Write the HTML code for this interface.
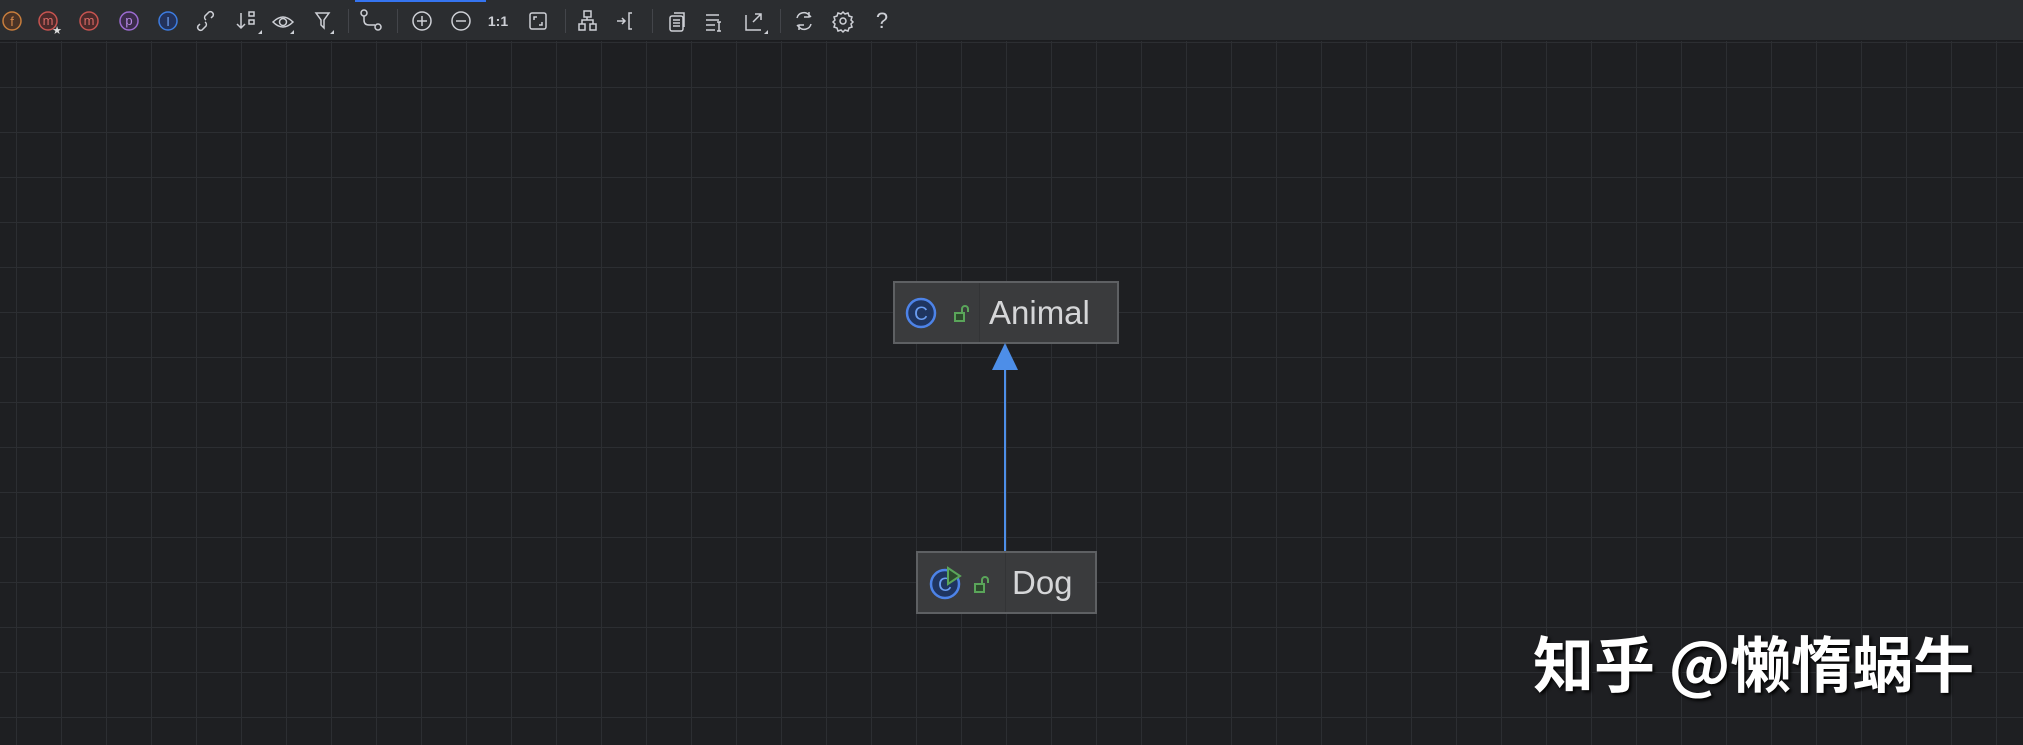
<!DOCTYPE html><html><head><meta charset="utf-8"><style>
html,body{margin:0;padding:0}
body{width:2023px;height:745px;overflow:hidden;position:relative;background:#1e1f22;font-family:"Liberation Sans","Noto Sans CJK SC",sans-serif}
.grid{position:absolute;left:0;top:40px;width:2023px;height:705px;
background-image:linear-gradient(to right,#2c2e32 1px,transparent 1px),linear-gradient(to bottom,#2c2e32 1px,transparent 1px);
background-size:45px 45px;background-position:16px 2px}
.tb{position:absolute;left:0;top:0;width:2023px;height:40px;background:#2b2d30;border-bottom:1px solid #1b1c1f}
.node{position:absolute;background:#3a3b3d;border:2px solid #5e6063;box-sizing:border-box}
.node .div{position:absolute;top:0;bottom:0;width:1px;background:#333436}
.node span{position:absolute;color:#d5d6d8;font-size:33px;top:11px}
.wm{position:absolute;left:1533px;top:616px;color:#fff;font-size:61px;font-weight:bold;font-family:"Noto Sans CJK SC",sans-serif;text-shadow:2px 2px 3px #000;white-space:pre}
</style></head><body>
<div class="grid"></div>
<div class="tb"></div>
<div style="position:absolute;left:355px;top:0;width:131px;height:2px;background:#3574f0"></div>
<svg width="2023" height="42" style="position:absolute;left:0;top:0" fill="none" stroke-width="1.5">
<g font-family="Liberation Sans" text-anchor="middle">
<circle cx="12" cy="21" r="9" stroke="#c77d3c" fill="#4a3326"/><text x="12" y="26" font-size="13" fill="#d8894a">f</text>
<circle cx="48" cy="21" r="9" stroke="#c75450" fill="#4b2a2a"/><text x="48" y="25" font-size="13" fill="#d86a66">m</text>
<text x="57" y="34" font-size="11" fill="#ddd">★</text>
<circle cx="89" cy="21" r="9" stroke="#c75450" fill="#4b2a2a"/><text x="89" y="25" font-size="13" fill="#d86a66">m</text>
<circle cx="129" cy="21" r="9" stroke="#9b6bd0" fill="#3b2c4b"/><text x="129" y="25" font-size="13" fill="#b88ae6">p</text>
<circle cx="168" cy="21" r="9" stroke="#3d7ce0" fill="#23325a"/><text x="168" y="26" font-size="13" fill="#6ea0f0">I</text>
</g>
<g stroke="#ced0d6">
<path d="M200 24l-2 2a3 3 0 0 0 4 4l4-4a3 3 0 0 0-1-4M211 18l2-2a3 3 0 0 0-4-4l-4 4a3 3 0 0 0 1 4"/>
<path d="M241 13v15M237 24l4 4 4-4"/><rect x="249" y="12" width="5" height="4"/><rect x="249" y="20" width="5" height="4"/>
<path d="M273 22q10-10 20 0q-10 10-20 0z"/><circle cx="283" cy="22" r="3.5"/>
<path d="M316 13h13l-5 7v8l-3-3v-5z"/>
<circle cx="364" cy="13" r="3"/><circle cx="378" cy="27" r="3"/><path d="M364 16v4q0 5 5 5h6"/>
<circle cx="422" cy="21" r="9"/><path d="M417 21h10M422 16v10"/>
<circle cx="461" cy="21" r="9"/><path d="M456 21h10"/>
<rect x="530" y="13" width="16" height="16" rx="2"/><path d="M534 20v-3h3M542 22v3h-3"/>
<rect x="584" y="11" width="7" height="6"/><rect x="579" y="24" width="6" height="6"/><rect x="590" y="24" width="6" height="6"/><path d="M587 17v3h-5v4M587 20h6v4"/>
<path d="M617 21h8M622 18l3 3-3 3M632 13h-3v16h3"/>
<rect x="670" y="16" width="13" height="15" rx="2"/><path d="M674 13h10v14M673 20h7M673 23h7M673 26h7"/>
<path d="M706 15h13M706 20h13M706 25h9M706 30h9M719 22v9M717 22h4M717 31h4"/>
<path d="M746 15v15h15M753 22l8-8M755 14h6v6"/>
<path d="M797 18a7 7 0 0 1 12-3l2 2M809 12v5h-5M811 24a7 7 0 0 1-12 3l-2-2M799 30v-5h5"/>
<circle cx="843" cy="21" r="3"/><path d="M843 12l2 2 3-1 1 3 3 1-1 3 2 2-2 2 1 3-3 1-1 3-3-1-2 2-2-2-3 1-1-3-3-1 1-3-2-2 2-2-1-3 3-1 1-3 3 1z"/>
</g>
<g fill="#ced0d6"><path d="M258 34l4-4v4z"/><path d="M290 34l4-4v4z"/><path d="M330 34l4-4v4z"/><path d="M764 34l4-4v4z"/></g>
<text x="498" y="26" font-family="Liberation Sans" font-weight="bold" font-size="14" fill="#ced0d6" text-anchor="middle">1:1</text>
<text x="882" y="28" font-family="Liberation Sans" font-size="22" fill="#ced0d6" text-anchor="middle">?</text>
<g stroke="#43454a" stroke-width="1"><path d="M348.5 9v24M397.5 9v24M565.5 9v24M652.5 9v24M780.5 9v24"/></g>
</svg>
<div class="node" style="left:893px;top:281px;width:226px;height:63px"><div class="div" style="left:84px"></div>
<svg width="80" height="59" style="position:absolute;left:0;top:0"><circle cx="26" cy="30" r="14" fill="#1f3560" stroke="#4d83e8" stroke-width="2.5"/><text x="26" y="37" font-family="Liberation Sans" font-size="19" fill="#6a9df2" text-anchor="middle">C</text><rect x="60" y="30" width="9" height="8" fill="#2d4a2d" stroke="#5aa55a" stroke-width="2"/><path d="M67 30v-4a3 3 0 0 1 6 0v3" fill="none" stroke="#5aa55a" stroke-width="2"/></svg>
<span style="left:94px">Animal</span></div>
<div class="node" style="left:916px;top:551px;width:181px;height:63px"><div class="div" style="left:87px"></div>
<svg width="85" height="59" style="position:absolute;left:0;top:0"><circle cx="27" cy="31" r="14" fill="#1f3560" stroke="#4d83e8" stroke-width="2.5"/><text x="27" y="38" font-family="Liberation Sans" font-size="19" fill="#6a9df2" text-anchor="middle">C</text><path d="M30 15l12 8-12 8z" fill="#2d4a2d" stroke="#5aa55a" stroke-width="2"/><rect x="57" y="31" width="9" height="8" fill="#2d4a2d" stroke="#5aa55a" stroke-width="2"/><path d="M64 31v-4a3 3 0 0 1 6 0v3" fill="none" stroke="#5aa55a" stroke-width="2"/></svg>
<span style="left:94px">Dog</span></div>
<div style="position:absolute;left:1004px;top:365px;width:2px;height:186px;background:#4d8ee8"></div>
<svg width="30" height="30" style="position:absolute;left:991px;top:343px"><path d="M14 0L27 27H1z" fill="#4d8ee8"/></svg>
<div class="wm">知乎 @懒惰蜗牛</div>
</body></html>
